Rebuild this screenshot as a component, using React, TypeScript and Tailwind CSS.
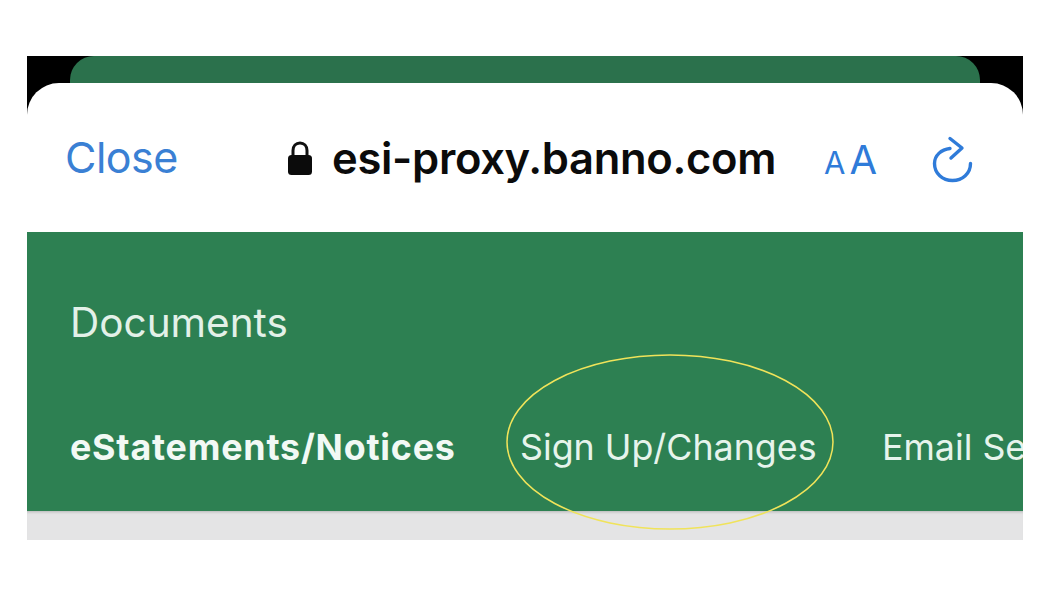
const font = { fontFamily: 'Inter, sans-serif' };

function LockIcon() {
  return (
    <svg width="26" height="36" viewBox="0 0 26 36" className="shrink-0">
      <path d="M6 16V10.500C6 6 9 3 13 3s7 3 7 7.500V16" fill="none" stroke="#111" strokeWidth="3" />
      <rect x="1" y="15" width="24" height="20" rx="3.500" fill="#0b0b0b" />
    </svg>
  );
}

function ReloadIcon() {
  return (
    <svg width="44" height="50" viewBox="0 0 44 50" fill="none" stroke="#2f7bd9" strokeWidth="3.4" strokeLinecap="round" strokeLinejoin="round">
      <path d="M20 12.500C11 13.500 4.500 19.500 4.500 27.500 4.500 37.500 12.500 44.500 22.500 44.500s18-7 18-17" />
      <path d="M20 2.500l12 9.500-11 10" />
    </svg>
  );
}

export default function App() {
  return (
    <div className="relative h-[600px] w-[1050px] overflow-hidden bg-white" style={font}>
      <div className="ml-[27px] pt-[56px] w-[996px]">
        <div className="bg-black h-[27px] px-[43px] overflow-hidden">
          <div className="h-[27px] w-[910px] bg-[#2b714c] rounded-t-[24px]" />
        </div>
        <div className="bg-black">
          <div className="h-[149px] bg-white rounded-t-[32px] flex items-center whitespace-nowrap">
            <span className="ml-[38px] w-[222px] shrink-0 text-[43px] text-[#3a80d4] tracking-[-0.5px] leading-none">Close</span>
            <div className="flex items-center gap-[19px] shrink-0">
              <LockIcon />
              <span className="text-[43.5px] font-semibold text-[#0b0b0b] leading-none tracking-[-0.3px] w-[444px] mt-[3px]">esi-proxy.banno.com</span>
            </div>
            <div className="ml-[48px] w-[52px] shrink-0 flex items-baseline text-[#2f7bd9] leading-none mt-[4px]">
              <span className="text-[31px] mr-[4px]">A</span>
              <span className="text-[40px]">A</span>
            </div>
            <div className="ml-[54px] mt-[6px] shrink-0">
              <ReloadIcon />
            </div>
          </div>
        </div>
        <div className="h-[279px] bg-[#2d8052] flex flex-col overflow-hidden whitespace-nowrap">
          <div className="ml-[43px] mt-[67px] text-[40.5px] leading-[48px] text-[#e3f1e8]">Documents</div>
          <div className="ml-[43px] mt-[78px] flex items-center text-[35.8px] leading-[44px] text-[#e6f4ec]">
            <span className="font-bold text-[#f2f9f5] w-[450px] shrink-0 tracking-[0.8px]">eStatements/Notices</span>
            <span className="w-[362px] shrink-0">Sign Up/Changes</span>
            <span className="shrink-0">Email Settings</span>
          </div>
        </div>
        <div className="h-[29px] bg-[#e4e4e5] shadow-[inset_0_3px_3px_-2px_rgba(0,0,0,0.2)]" />
      </div>
      <svg className="absolute left-[500px] top-[350px] pointer-events-none" width="345" height="185" fill="none">
        <ellipse cx="170" cy="92" rx="163" ry="87" stroke="#f0e35a" strokeWidth="1.5" />
      </svg>
    </div>
  );
}
